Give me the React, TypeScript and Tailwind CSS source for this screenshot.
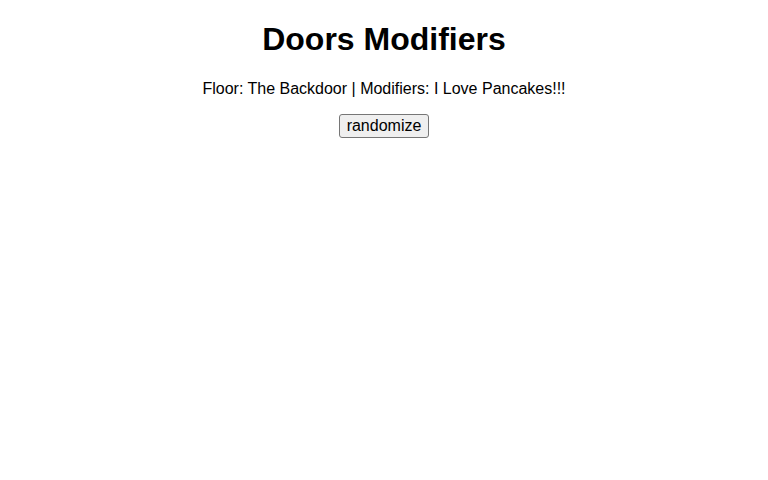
export default function App() {
  return (
    <div className="min-h-[480px] bg-white text-center text-black font-['Liberation_Sans',Arial,sans-serif]">
      <h1 className="pt-[21px] text-[32px] leading-[37px] font-bold">Doors Modifiers</h1>
      <p className="mt-[22px] text-base leading-[18px]">
        Floor: The Backdoor | Modifiers: I Love Pancakes!!!
      </p>
      <div className="mt-[16px]">
        <button className="px-[7px] py-[2px] text-base leading-[18px] bg-[#efefef] border border-[#767676] rounded-[3px]">
          randomize
        </button>
      </div>
    </div>
  );
}
